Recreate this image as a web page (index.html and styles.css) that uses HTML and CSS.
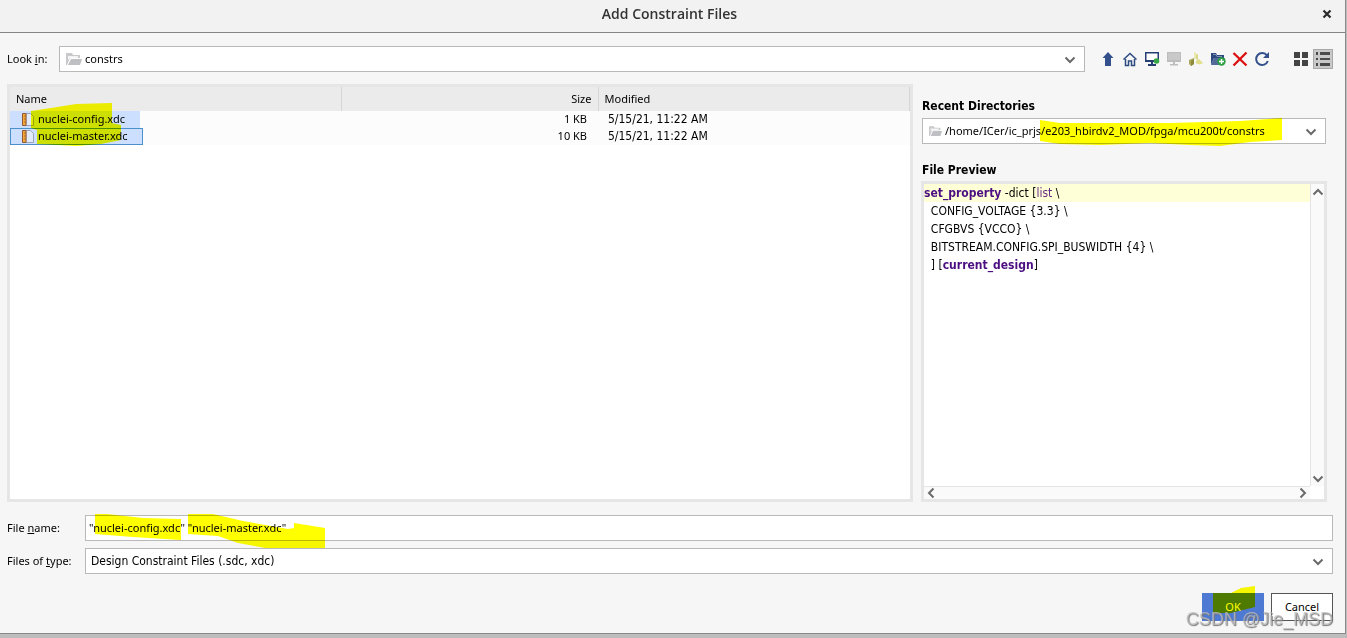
FILE: index.html
```html
<!DOCTYPE html>
<html lang="en">
<head>
<meta charset="utf-8">
<title>Add Constraint Files</title>
<link rel="stylesheet" href="styles.css">
</head>
<body>
<svg class="defs" aria-hidden="true">
  <symbol id="folder" viewBox="0 0 16 14"><path d="M0 13V1h6l1 2h7v3H4L1 13z" fill="#c9c9cc"/><path d="M2 4h10v2H4L2 8z" fill="#f4f4f4"/><path d="M5 7h11l-2 6H2z" fill="#bfc0c4"/></symbol>
  <symbol id="chevron" viewBox="0 0 12 8"><path d="M1.5 1.5 6 6l4.500-4.500" fill="none" stroke="#6a6a6a" stroke-width="2"/></symbol>
  <symbol id="xdc" viewBox="0 0 14 15"><path d="M5 1.500h4.500l3 3V13.500H5z" fill="#e2eafa" stroke="#9aa6bb"/><path d="M1.500 1.500h3.500v12H1.500z" fill="#f5a83c" stroke="#8f5a34"/><path d="M3 4h2M3 7h2M3 10h2" stroke="#b06a24"/></symbol>
</svg>
<main class="dialog">
  <header class="titlebar">
    <h1>Add Constraint Files</h1>
    <button class="close" aria-label="Close"><svg width="10" height="10" viewBox="0 0 10 10"><path d="M1.500 1.500l7 7M8.500 1.500l-7 7" stroke="#2b2b2b" stroke-width="2.200"/></svg></button>
  </header>
  <div class="content">
    <div class="lookin">
      <label for="look">Look <u>i</u>n:</label>
      <div class="combo">
        <svg class="lead" width="16" height="14"><use href="#folder"/></svg>
        <select id="look" class="with-icon"><option>constrs</option></select>
        <svg class="arrow" width="12" height="8"><use href="#chevron"/></svg>
      </div>
      <div class="tools">
        <button aria-label="Up one level"><svg width="16" height="16" viewBox="0 0 16 16"><path d="M8 1l5.500 6H11v8H5V7H2.500z" fill="#34508c"/></svg></button>
        <button aria-label="Home"><svg width="16" height="16" viewBox="0 0 16 16"><path d="M1.500 8.500L8 2.500l6.500 6M3.500 8v6.500h3V10h3v4.500h3V8" fill="none" stroke="#2d4a80" stroke-width="1.500"/></svg></button>
        <button aria-label="Desktop"><svg width="16" height="16" viewBox="0 0 16 16"><path d="M1.750 1.750h12.500v8.500H1.750z" fill="#fff" stroke="#263f73" stroke-width="1.500"/><path d="M1 9h14v2H1zM7 11h2v2H7zM4 13h8v2H4z" fill="#263f73"/><circle cx="12.500" cy="10" r="2.800" fill="#36a846"/></svg></button>
        <button aria-label="Working directory" disabled><svg width="16" height="16" viewBox="0 0 16 16"><path d="M1 1h14v10H9v2h3v1.500H4V13h3v-2H1z" fill="#bdbdbd"/><path d="M2 2h12v7H2z" fill="#c9c9c9"/></svg></button>
        <button aria-label="Project directory"><svg width="16" height="16" viewBox="0 0 16 16"><path d="M6 1l4 3v5L6 7z" fill="#d8d884"/><path d="M6 1l2 1v6L6 7z" fill="#ecebb0"/><path d="M1 9l5-2v6l-3 2-2-2z" fill="#a9a75a"/><path d="M3 10l3-2v5l-3 2z" fill="#8e8c3c"/><path d="M8 10l3-2 4 4-3 1.500-4-1z" fill="#e2df8c"/></svg></button>
        <button aria-label="New folder"><svg width="16" height="16" viewBox="0 0 16 16"><path d="M1 14V2h5l1 2h7v3H4z" fill="#2d4a80"/><path d="M3 3.500h3l1 2h5" stroke="#8091b5" fill="none"/><path d="M4 7h11l-2 7H1z" fill="#536b9b"/><circle cx="11.500" cy="10.500" r="4.200" fill="#2ea044"/><path d="M9 10.500h5M11.500 8v5" stroke="#fff" stroke-width="1.400"/></svg></button>
        <button aria-label="Delete"><svg width="16" height="16" viewBox="0 0 16 16"><path d="M1.500 2l13 12.500M14.500 1.500L1.500 14.500" stroke="#dc1010" stroke-width="2.300"/></svg></button>
        <button aria-label="Refresh"><svg width="16" height="16" viewBox="0 0 16 16"><path d="M13 4.500A6 6 0 1 0 13.800 10" fill="none" stroke="#34508c" stroke-width="2"/><path d="M15 1v6H9z" fill="#34508c"/></svg></button>
        <button class="view" aria-label="Icon view"><svg width="16" height="16" viewBox="0 0 16 16"><path d="M1 1h6v6H1zM9 1h6v6H9zM1 9h6v6H1zM9 9h6v6H9z" fill="#444"/></svg></button>
        <button class="on" aria-label="List view"><svg width="16" height="16" viewBox="0 0 16 16"><path d="M1 1h2v3H1zM5 1h10v3H5zM1 7h2v2H1zM5 7h10v2H5zM1 12h2v3H1zM5 12h10v3H5z" fill="#4a4a4a"/></svg></button>
      </div>
    </div>

    <div class="panes">
      <section class="files">
        <table>
          <thead><tr><th class="name">Name</th><th class="size">Size</th><th class="date">Modified</th></tr></thead>
          <tbody>
            <tr><td class="name"><span class="file"><svg width="14" height="15"><use href="#xdc"/></svg>nuclei-config.xdc</span></td><td class="size">1 KB</td><td class="date">5/15/21, 11:22 AM</td></tr>
            <tr><td class="name"><span class="file focus"><svg width="14" height="15"><use href="#xdc"/></svg>nuclei-master.xdc</span></td><td class="size">10 KB</td><td class="date">5/15/21, 11:22 AM</td></tr>
          </tbody>
        </table>
        <svg class="marker mark-files" width="92" height="44" viewBox="0 0 92 44"><path d="M0 8L20 5 45 1 81 0V20L90 22V37L70 41 45 43 6 41V27L0 25z"/></svg>
      </section>

      <section class="side">
        <label class="heading" for="recent">Recent Directories</label>
        <div class="combo">
          <svg class="lead small" width="13" height="12"><use href="#folder"/></svg>
          <select id="recent" class="with-small"><option>/home/ICer/ic_prjs/e203_hbirdv2_MOD/fpga/mcu200t/constrs</option></select>
          <svg class="arrow" width="12" height="8"><use href="#chevron"/></svg>
          <svg class="marker mark-path" width="242" height="29" viewBox="0 0 242 29"><path d="M0 2L20 5H130L200 3 242 0V22L210 24 180 28 150 27 110 25 60 27 20 26 0 23z"/></svg>
        </div>
        <h2 class="heading">File Preview</h2>
        <div class="preview">
          <pre class="code"><span class="line current"><b>set_property</b> -dict [<i>list</i> \</span><span class="line">  CONFIG_VOLTAGE {3.3} \</span><span class="line">  CFGBVS {VCCO} \</span><span class="line">  BITSTREAM.CONFIG.SPI_BUSWIDTH {4} \</span><span class="line">  ] [<b>current_design</b>]</span></pre>
          <div class="vscroll"><svg class="up" width="12" height="8"><use href="#chevron"/></svg><svg width="12" height="8"><use href="#chevron"/></svg></div>
          <div class="hscroll"><svg class="left" width="12" height="8"><use href="#chevron"/></svg><svg class="right" width="12" height="8"><use href="#chevron"/></svg></div>
        </div>
      </section>
    </div>

    <div class="fields">
      <label for="fname">File <u>n</u>ame:</label>
      <div class="combo">
        <input id="fname" type="text" value='"nuclei-config.xdc" "nuclei-master.xdc"'>
        <svg class="marker mark-name" width="232" height="36" viewBox="0 0 232 36"><path d="M2 0H14L50 4 88 5V26L40 23 2 20zM95 0H120L150 7 195 15 201 14V9L232 14V35H178L145 29 125 22 95 20z"/></svg>
      </div>
      <label for="ftype">Files of <u>t</u>ype:</label>
      <div class="combo">
        <select id="ftype" class="wide-text"><option>Design Constraint Files (.sdc, xdc)</option></select>
        <svg class="arrow" width="12" height="8"><use href="#chevron"/></svg>
      </div>
    </div>

    <footer class="actions">
      <button class="ok">OK<svg class="marker mark-ok" width="42" height="28" viewBox="0 0 42 28"><path d="M0 7H18L28 2 42 0V21L30 24 18 27H0z"/></svg></button>
      <button class="cancel">Cancel</button>
      <span class="watermark">CSDN @Jie_MSD</span>
    </footer>
  </div>
</main>
</body>
</html>
```
FILE: styles.css
```css
* { box-sizing: border-box; }
body {
  margin: 0;
  height: 100vh;
  padding: 0 1px 4px 0;
  background: #bdbdbd;
  color: #000;
  font: 11px/16px "Noto Sans", "DejaVu Sans Condensed", sans-serif;
  overflow: hidden;
}
button, input, select { font: inherit; color: inherit; margin: 0; }
button { padding: 0; border: 0; background: none; }
svg { display: block; }
.defs { display: none; }

.dialog {
  height: 100%;
  display: flex;
  flex-direction: column;
  background: #f6f6f6;
  border-right: 1px solid #8a8a8a;
  border-bottom: 1px solid #8a8a8a;
}
.titlebar {
  position: relative;
  height: 33px;
  flex: none;
  display: flex;
  align-items: center;
  justify-content: center;
  padding: 0 6px 4px 0;
  background: #f2f2f2;
  border-bottom: 1px solid #858585;
}
.titlebar h1 { margin: 0; font: 600 14px/20px "Open Sans", "Noto Sans", sans-serif; color: #333; }
.close { position: absolute; right: 13px; top: 9px; }

.content { flex: 1; min-height: 0; display: flex; flex-direction: column; padding: 13px 12px 12px 7px; }
.lookin { display: flex; align-items: center; }
.lookin label { width: 52px; }
.lookin .combo { margin-right: 12px; }
.combo { position: relative; flex: 1; min-width: 0; height: 26px; }
.combo select, .combo input {
  appearance: none;
  display: block;
  width: 100%;
  height: 26px;
  border: 1px solid #b9b9b9;
  border-radius: 0;
  background: #fff;
  padding: 0 28px 0 5px;
  outline: 0;
}
.combo input { padding: 0 28px 2px 3px; }
.combo select.with-icon { padding-left: 25px; }
.combo select.with-small { padding-left: 22px; }
.combo select.wide-text, .files td.date, .code, .heading {
  font-family: "DejaVu Sans Condensed", "DejaVu Sans", sans-serif;
  font-size: 12px;
}
.lead { position: absolute; left: 7px; top: 6px; }
.lead.small { top: 7px; }
.arrow { position: absolute; right: 9px; top: 10px; }
.tools { display: flex; margin-right: -1px; }
.tools button { width: 22px; height: 22px; display: grid; place-items: center; }
.tools .view { margin-left: 17px; }
.tools .on { width: 20px; height: 20px; margin: 1px; background: #c9c9c9; border: 1px solid #a8a8a8; }

.panes { flex: 1; min-height: 0; display: flex; gap: 8px; margin: 12px 6px 13px 0; }
.files { position: relative; flex: 1; min-width: 0; background: #fff; border: 3px solid #e6e6e6; }
.files table { width: 100%; table-layout: fixed; border-collapse: collapse; }
.files th, .files td { padding: 0; font-weight: 400; text-align: left; white-space: nowrap; }
.files th { height: 24px; background: #ebebeb; border-right: 1px solid #d6d6d6; }
.files td { height: 17px; padding-bottom: 1px; background: #fcfcfc; }
.files td.name { padding: 0; }
.files th.name { width: 331px; padding-left: 6px; }
.files th.size { width: 257px; padding-right: 6px; }
.files th.date { padding-left: 6px; }
.files .size { text-align: right; }
.files td.size { padding-right: 11px; }
.files td.date { padding-left: 10px; }
.file {
  display: inline-flex;
  align-items: center;
  gap: 3px;
  height: 17px;
  padding: 0 14px 1px 10px;
  line-height: 14px;
  background: #ccdfff;
  border: 1px solid #ccdfff;
  vertical-align: top;
}
.file.focus { border-color: #4a90cc; }

.side { flex: none; width: 406px; display: flex; flex-direction: column; padding-top: 14px; }
.side .combo { flex: none; margin: 4px 1px 0; }
.heading { margin: 0 1px; font-weight: 700; line-height: 16px; }
h2.heading { margin-top: 18px; }
.preview {
  flex: 1;
  min-height: 0;
  margin-top: 3px;
  display: grid;
  grid-template: minmax(0, 1fr) 13px / minmax(0, 1fr) 14px;
  background: #fff;
  border: 3px solid #e6e6e6;
}
.code { margin: 0; overflow: hidden; }
.line { display: block; line-height: 18px; }
.line.current { background: #ffffd7; }
.code b { color: #4b0f82; }
.code i { color: #6a2a86; font-style: normal; }
.vscroll, .hscroll { display: flex; align-items: center; justify-content: space-between; background: #fafafa; }
.vscroll { flex-direction: column; border-left: 1px solid #e4e4e4; padding: 4px 0 3px; }
.hscroll { border-top: 1px solid #e4e4e4; padding: 0 1px; }
.up { transform: rotate(180deg); }
.left { transform: rotate(90deg); }
.right { transform: rotate(-90deg); }

.fields { display: grid; grid-template-columns: 78px minmax(0, 1fr); row-gap: 7px; align-items: center; }
.actions { position: relative; display: flex; justify-content: flex-end; gap: 7px; margin-top: 19px; }
.actions button { width: 62px; height: 28px; }
.ok { position: relative; background: #4f7ad4; color: #fff; }
.cancel { background: #fff; border: 1px solid #555; }

.marker { position: absolute; fill: #ff0; mix-blend-mode: multiply; pointer-events: none; }
.mark-files { left: 21px; top: 16px; }
.mark-path { left: 118px; top: 0; }
.mark-name { left: 8px; top: -1px; }
.mark-ok { left: 11px; top: -7px; }

.watermark {
  position: absolute;
  right: 0;
  top: 14px;
  font: 18px/24px "Liberation Sans", sans-serif;
  color: rgba(190, 190, 190, .75);
  text-shadow: 1px 1px 1px #777;
  pointer-events: none;
}
```
